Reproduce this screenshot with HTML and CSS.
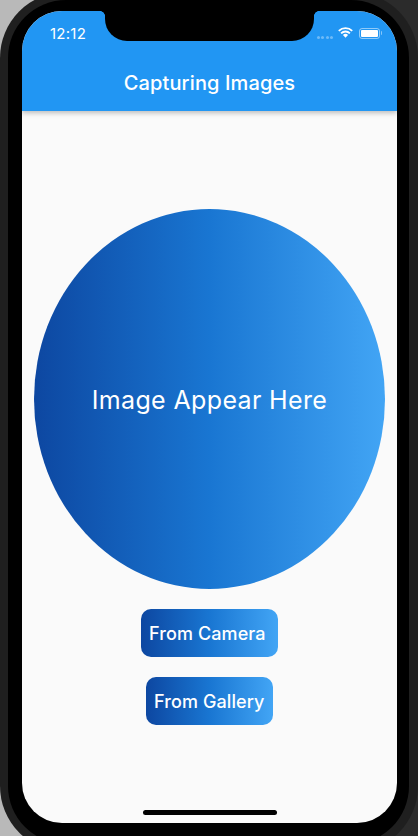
FILE: index.html
```html
<!DOCTYPE html>
<html lang="en">
<head>
<meta charset="utf-8">
<title>Capturing Images</title>
<link rel="stylesheet" href="styles.css">
</head>
<body>
<div class="device">
  <div class="bezel">
    <div class="screen">
      <div class="notch"></div>
      <header class="appbar">
        <div class="status">
          <span class="time">12:12</span>
          <span class="status-icons">
            <span class="signal"><i></i><i></i><i></i><i></i></span>
            <svg class="wifi" width="15" height="11" viewBox="0 0 16 12" aria-hidden="true">
              <path d="M.7 4.3a10.4 10.4 0 0 1 14.6 0" fill="none" stroke="#fff" stroke-width="2"/>
              <path d="M3.2 6.9a6.8 6.8 0 0 1 9.6 0" fill="none" stroke="#fff" stroke-width="2"/>
              <path d="M5.2 8.8a4 4 0 0 1 5.6 0L8 11.8z" fill="#fff"/>
            </svg>
            <span class="battery"><span class="battery-fill"></span></span>
            <span class="battery-cap"></span>
          </span>
        </div>
        <h1 class="title">Capturing Images</h1>
      </header>
      <main class="content">
        <div class="oval">Image Appear Here</div>
        <button class="action action-camera">From Camera</button>
        <button class="action action-gallery">From Gallery</button>
      </main>
      <div class="home-bar"></div>
    </div>
  </div>
</div>
</body>
</html>
```
FILE: styles.css
```css
* { box-sizing: border-box; }
html, body { margin: 0; height: 100%; }
body {
  width: 418px;
  height: 836px;
  overflow: hidden;
  background: linear-gradient(to right, #b9b9b9 0 50%, #2b2b2b 50% 100%);
  font-family: Inter, "Noto Sans", sans-serif;
}
.device {
  width: 418px;
  height: 860px;
  margin-top: -8px;
  padding: 8px 9px 8px 8px;
  border-radius: 66px;
  background: #1f1f1f;
}
.bezel {
  height: 844px;
  padding: 11px 12px 0 14px;
  border-radius: 58px;
  background: #000;
}
.screen {
  position: relative;
  width: 375px;
  height: 812px;
  border-radius: 40px;
  overflow: hidden;
  background: #fafafa;
  display: flex;
  flex-direction: column;
}
.notch {
  position: absolute;
  top: 0;
  left: 83px;
  width: 209px;
  height: 30px;
  background: #000;
  border-radius: 0 0 22px 22px;
  z-index: 2;
}
.notch::before,
.notch::after {
  content: "";
  position: absolute;
  top: 0;
  width: 5px;
  height: 5px;
}
.notch::before {
  left: -5px;
  background: radial-gradient(circle at 0 100%, transparent 4.6px, #000 5.2px);
}
.notch::after {
  right: -5px;
  background: radial-gradient(circle at 100% 100%, transparent 4.6px, #000 5.2px);
}
.appbar {
  height: 100px;
  flex: none;
  background: #2196f3;
  color: #fff;
  box-shadow: 0 2px 5px rgba(0, 0, 0, .25);
  z-index: 1;
}
.status {
  height: 44px;
  padding: 14px 15px 0 28px;
  display: flex;
  justify-content: space-between;
  align-items: flex-start;
}
.time { font-size: 15px; font-weight: 440; line-height: 17px; letter-spacing: .25px; }
.status-icons { display: flex; align-items: center; height: 14px; margin-top: 1px; }
.signal { display: flex; gap: 1.5px; margin-top: 9px; margin-right: 5px; }
.signal i { width: 3px; height: 3px; border-radius: 50%; background: rgba(255, 255, 255, .35); }
.wifi { margin-right: 6px; margin-top: -1px; }
.battery {
  width: 21px;
  height: 11px;
  padding: 1px;
  border: 1px solid rgba(255, 255, 255, .5);
  border-radius: 3px;
  display: block;
}
.battery-fill { display: block; height: 100%; background: #fff; border-radius: 1px; }
.battery-cap { width: 1.5px; height: 4px; margin-left: .5px; background: rgba(255, 255, 255, .45); border-radius: 0 1px 1px 0; }
.title {
  margin: 0;
  text-align: center;
  font-size: 20px;
  font-weight: 450;
  line-height: 56px;
  letter-spacing: .12px;
}
.content {
  flex: 1;
  display: flex;
  flex-direction: column;
  align-items: center;
  padding-top: 98px;
}
.oval {
  width: 351px;
  height: 380px;
  padding-top: 2px;
  border-radius: 50%;
  display: flex;
  align-items: center;
  justify-content: center;
  color: #fff;
  font-size: 25px;
  font-weight: 400;
  letter-spacing: .36px;
  background: linear-gradient(to right, #0d47a1, #1976d2 50%, #42a5f5);
}
.action {
  height: 48px;
  border: 0;
  border-radius: 10px;
  color: #fff;
  font-family: inherit;
  font-size: 18px;
  font-weight: 450;
  letter-spacing: .1px;
  background: linear-gradient(to right, #0d47a1, #1976d2 50%, #42a5f5);
  padding: 0 0 0 8px;
  text-align: left;
}
.action-camera { width: 137px; margin-top: 20px; }
.action-gallery { width: 127px; margin-top: 20px; }
.home-bar {
  position: absolute;
  left: 121px;
  bottom: 8px;
  width: 134px;
  height: 5px;
  border-radius: 3px;
  background: #000;
}
```
